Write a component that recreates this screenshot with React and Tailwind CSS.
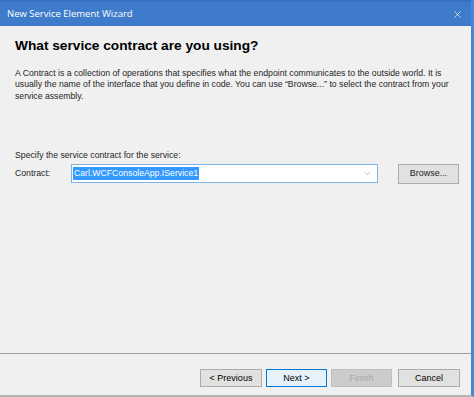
import { X, ChevronDown } from "lucide-react";

const btn =
  "h-[18px] shrink-0 flex items-center justify-center border text-[9px] leading-none";

const App = () => {
  return (
    <div
      className="w-[474px] h-[397px] flex flex-col bg-[#f0f0f0] border-r-[3px] border-r-[#4a86d0] border-b-2 border-b-[#b4b4b4] overflow-hidden"
      style={{ fontFamily: '"Liberation Sans", Arial, sans-serif' }}
    >
      {/* title bar */}
      <div className="h-[26px] shrink-0 flex items-center justify-between bg-[#3e7bcb] border-t-2 border-t-[#356fc0] pl-[7px] pr-[8px]">
        <span
          className="text-white text-[9.5px] leading-none"
          style={{ fontFamily: '"Open Sans", "Noto Sans", sans-serif' }}
        >
          New Service Element Wizard
        </span>
        <X className="w-[11px] h-[11px] text-white" strokeWidth={1.5} />
      </div>

      {/* body */}
      <div className="flex-1 flex flex-col pl-[15px] pt-[11px] text-[#1e1e1e]">
        <h1 className="text-[13.7px] leading-[18px] font-bold text-black">
          What service contract are you using?
        </h1>
        <p className="mt-[13px] w-[436px] text-[8.7px] leading-[11.25px]">
          A Contract is a collection of operations that specifies what the
          endpoint communicates to the outside world. It is usually the name of
          the interface that you define in code. You can use “Browse...” to
          select the contract from your service assembly.
        </p>
        <p className="mt-[47px] text-[8.7px] leading-[12px]">
          Specify the service contract for the service:
        </p>
        <div className="mt-[3px] flex items-center h-[20px]">
          <span className="w-[56px] shrink-0 text-[8.7px]">Contract:</span>
          <div className="w-[307px] h-[19px] shrink-0 flex items-center justify-between bg-white border border-[#7eb4ea] pl-[1px] pr-[5px]">
            <span className="bg-[#3399ff] text-white text-[8.7px] leading-[13px] px-[1px]">
              Carl.WCFConsoleApp.IService1
            </span>
            <ChevronDown className="w-[9px] h-[9px] text-[#8a8a8a]" strokeWidth={1.5} />
          </div>
          <button className={`${btn} ml-[20px] w-[61px] h-[20px] bg-[#e1e1e1] border-[#adadad]`}>
            Browse...
          </button>
        </div>
      </div>

      {/* footer */}
      <div className="h-[42px] shrink-0 border-t border-t-[#a0a0a0] flex items-start justify-end pt-[15px] pr-[11px]">
        <button className={`${btn} w-[62px] bg-[#e1e1e1] border-[#adadad]`}>
          &lt; Previous
        </button>
        <button className={`${btn} ml-[4px] w-[61px] bg-[#e5f1fb] border-[#0078d7]`}>
          Next &gt;
        </button>
        <button className={`${btn} ml-[4px] w-[61px] bg-[#cccccc] border-[#bfbfbf] text-[#a6a6a6]`}>
          Finish
        </button>
        <button className={`${btn} ml-[6px] w-[62px] bg-[#e1e1e1] border-[#adadad]`}>
          Cancel
        </button>
      </div>
    </div>
  );
};

export default App;
